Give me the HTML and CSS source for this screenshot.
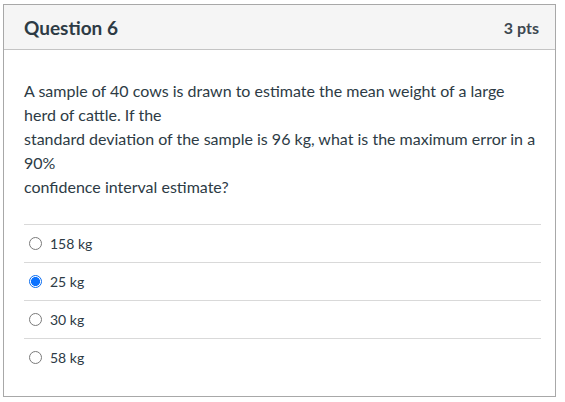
FILE: index.html
```html
<!DOCTYPE html>
<html>
<head>
<meta charset="utf-8">
<link rel="stylesheet" href="styles.css">
</head>
<body>
<div class="card">
  <div class="header">
    <span class="title">Question 6</span>
    <span class="pts">3 pts</span>
  </div>
  <div class="content">
    <div class="question">
      A sample of 40 cows is drawn to estimate the mean weight of a large<br>
      herd of cattle. If the<br>
      standard deviation of the sample is 96 kg, what is the maximum error in a<br>
      90%<br>
      confidence interval estimate?
    </div>
    <div class="answers">
      <div class="answer"><span class="radio"></span><span class="label">158 kg</span></div>
      <div class="answer"><span class="radio checked"></span><span class="label">25 kg</span></div>
      <div class="answer"><span class="radio"></span><span class="label">30 kg</span></div>
      <div class="answer"><span class="radio"></span><span class="label">58 kg</span></div>
    </div>
  </div>
</div>
</body>
</html>
```

FILE: styles.css
```css
html, body {
  margin: 0;
  padding: 0;
  background: #ffffff;
}
body {
  font-family: Lato, "Liberation Sans", sans-serif;
  color: #2d3b45;
}
.card {
  margin: 4px 0 0 3px;
  width: 551px;
  height: 391px;
  border: 1px solid #a8a8a8;
  box-sizing: content-box;
}
.header {
  height: 44px;
  background: #f5f5f5;
  border-bottom: 1px solid #c4c4c4;
  display: flex;
  align-items: center;
  justify-content: space-between;
  padding: 0 16px 0 20px;
}
.title {
  font-size: 19px;
  font-weight: 700;
}
.pts {
  font-size: 16px;
  font-weight: 700;
  color: #3d4850;
}
.content {
  padding: 29px 14px 0 20px;
}
.question {
  font-size: 16px;
  line-height: 24px;
}
.answers {
  margin-top: 25px;
}
.answer {
  border-top: 1px solid #d9d9d9;
  height: 37px;
  display: flex;
  align-items: center;
  padding-left: 5px;
  font-size: 14px;
}
.radio {
  width: 13px;
  height: 13px;
  border: 1px solid #7a7a7a;
  border-radius: 50%;
  box-sizing: border-box;
  margin-right: 8px;
  background: #fff;
}
.radio.checked {
  border: 1px solid #0a6cf0;
  background: radial-gradient(circle, #0b72ff 0 4.2px, #fff 4.8px);
}
```
